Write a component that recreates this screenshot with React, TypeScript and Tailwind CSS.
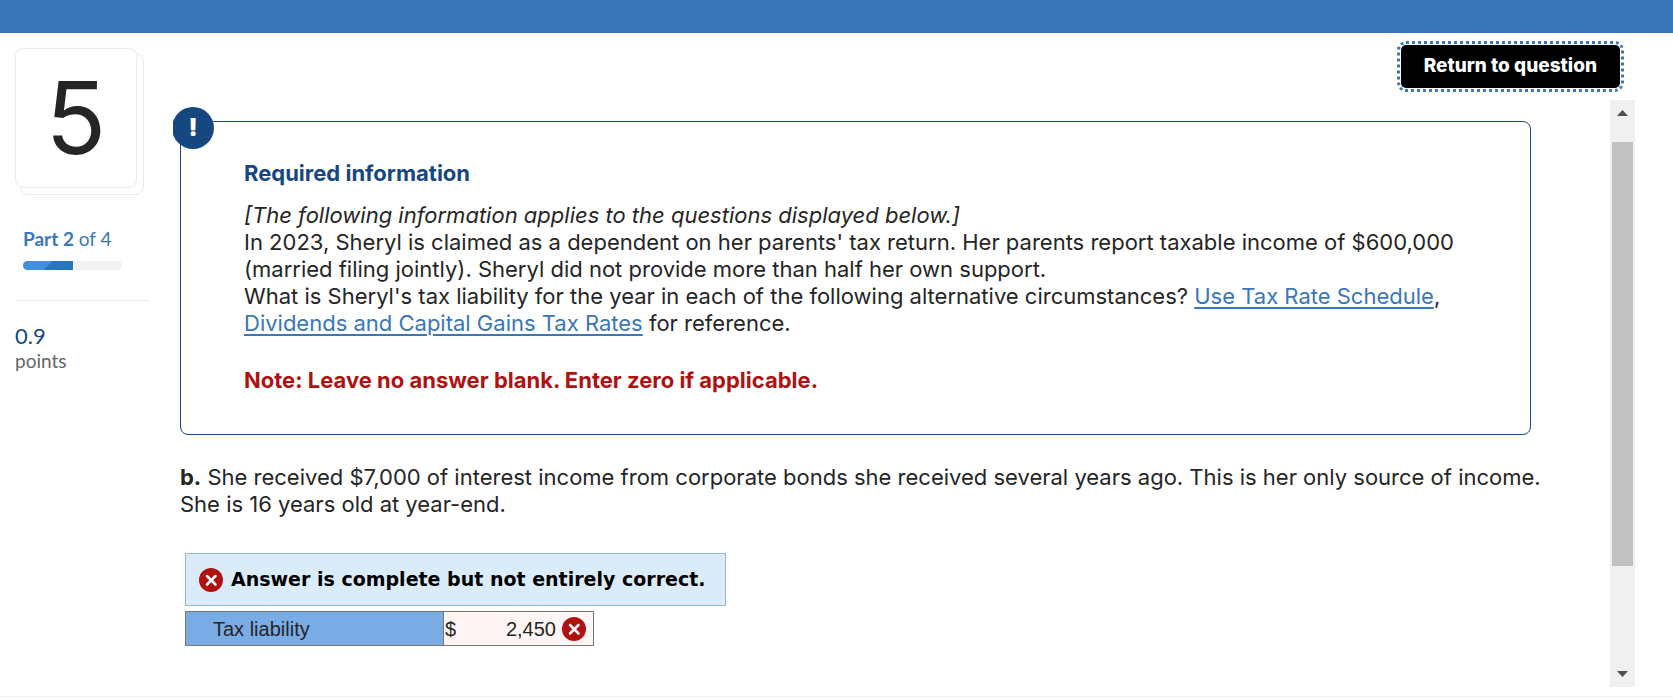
import type { ReactNode } from "react"

function WrongIcon() {
  return (
    <svg viewBox="0 0 24 24" className="size-6 shrink-0" role="img" aria-label="Incorrect">
      <circle cx="12" cy="12" r="12" fill="#b01111" />
      <path d="M8 8l8.5 8.5M16.5 8L8 16.5" stroke="#fff" strokeWidth="2.5" strokeLinecap="round" />
    </svg>
  )
}

function RefLink({ children }: { children: ReactNode }) {
  return (
    <a href="#" className="text-[#3976ba] underline decoration-2 underline-offset-3">
      {children}
    </a>
  )
}

function Sidebar() {
  return (
    <aside className="w-[135px] shrink-0 pt-[15px] font-['Lato',sans-serif]">
      <div className="relative h-[140px] w-[122px]">
        <div className="absolute top-[5px] left-[5px] h-[142px] w-[124px] rounded-lg border border-[#ebebeb]" />
        <div className="relative flex h-full items-center justify-center rounded-lg border border-[#ebebeb] bg-white font-['Inter',sans-serif] text-[100px] leading-none text-[#252525]">
          5
        </div>
      </div>

      <div className="mt-[39px] px-2 text-[19px] leading-6 text-[#3976ba]">
        <span className="font-bold">Part 2</span> of 4
      </div>
      <div className="mt-[10px] ml-2 h-[9px] w-[99px] overflow-hidden rounded-full bg-[#f2f2f2]">
        <div className="h-full w-1/2 bg-linear-135 from-[#428fda] from-50% to-[#2876bd] to-50%" />
      </div>

      <hr className="mt-[30px] border-[#ebebeb]" />

      <div className="mt-[22px] text-[22px] leading-[26px] text-[#164781]">0.9</div>
      <div className="text-[19px] leading-6 text-[#666]">points</div>
    </aside>
  )
}

function RequiredInfo() {
  return (
    <section className="relative mt-[21px] mr-[79px] ml-[7px] rounded-lg border border-[#164781] px-[63px] pt-[38px] pb-10">
      <div className="absolute -top-[15px] -left-[9px] flex size-[42px] items-center justify-center rounded-full bg-[#164781] text-2xl font-black text-white">
        !
      </div>
      <h2 className="mb-[15px] font-bold text-[#164781]">Required information</h2>
      <p className="italic">[The following information applies to the questions displayed below.]</p>
      <p>
        In 2023, Sheryl is claimed as a dependent on her parents' tax return. Her parents report taxable income of
        $600,000 (married filing jointly). Sheryl did not provide more than half her own support.
      </p>
      <p>
        What is Sheryl's tax liability for the year in each of the following alternative circumstances?{" "}
        <RefLink>Use Tax Rate Schedule</RefLink>, <RefLink>Dividends and Capital Gains Tax Rates</RefLink> for
        reference.
      </p>
      <p className="mt-[30px] font-bold text-[#b01111]">Note: Leave no answer blank. Enter zero if applicable.</p>
    </section>
  )
}

function Answer() {
  return (
    <div className="mt-[35px] ml-3 text-xl">
      <div className="flex h-[53px] w-fit items-center gap-2 border border-[#93b7dc] bg-[#daecfa] pr-5 pl-[13px] font-['Verdana','DejaVu_Sans',sans-serif] text-[19px] font-bold text-black">
        <WrongIcon />
        Answer is complete but not entirely correct.
      </div>
      <table className="mt-[5px] border-collapse font-['Liberation_Sans',Arial,sans-serif] leading-6">
        <tbody>
          <tr className="h-[34px]">
            <th scope="row" className="w-[258px] border border-[#777] bg-[#79abe4] pl-[27px] text-left font-normal">
              Tax liability
            </th>
            <td className="w-[150px] border border-[#777] bg-[#fff5f4] pr-[7px] pl-px">
              <div className="flex items-center gap-[6px]">
                <span className="flex-1">$</span>
                <span>2,450</span>
                <WrongIcon />
              </div>
            </td>
          </tr>
        </tbody>
      </table>
    </div>
  )
}

function Scrollbar() {
  return (
    <div className="flex w-[25px] shrink-0 flex-col items-center bg-[#f0f0f0]" aria-hidden="true">
      <svg viewBox="0 0 11 6" className="mt-[10px] h-[6px] w-[11px]">
        <path d="M0 6L5.5 0L11 6Z" fill="#505050" />
      </svg>
      <div className="mt-[26px] h-[424px] w-[21px] bg-[#c1c1c1]" />
      <svg viewBox="0 0 11 6" className="mt-auto mb-[10px] h-[6px] w-[11px]">
        <path d="M0 0L5.5 6L11 0Z" fill="#505050" />
      </svg>
    </div>
  )
}

export default function App() {
  return (
    <div className="flex min-h-screen flex-col bg-white font-['Inter',sans-serif] text-[#252525]">
      <header className="h-[33px] bg-[#3976ba]" />
      <div className="flex border-b border-[#f2f2f2] pr-[38px] pb-[9px] pl-[15px]">
        <Sidebar />
        <main className="ml-[23px] flex min-w-0 flex-1 flex-col">
          <div className="flex justify-end pt-3 pr-[15px] pb-3">
            <button
              type="button"
              className="h-[43px] rounded-[5px] bg-black px-[23px] text-[19px] font-extrabold text-white outline-3 outline-offset-1 outline-[#3976ba] outline-dotted"
            >
              Return to question
            </button>
          </div>
          <div className="flex h-[587px]">
            <div className="flex-1 overflow-hidden text-[22px] leading-[27px]">
              <RequiredInfo />
              <p className="mt-[29px] mr-[55px] ml-[7px]">
                <b className="font-bold">b.</b> She received $7,000 of interest income from corporate bonds she
                received several years ago. This is her only source of income. She is 16 years old at year-end.
              </p>
              <Answer />
            </div>
            <Scrollbar />
          </div>
        </main>
      </div>
    </div>
  )
}
